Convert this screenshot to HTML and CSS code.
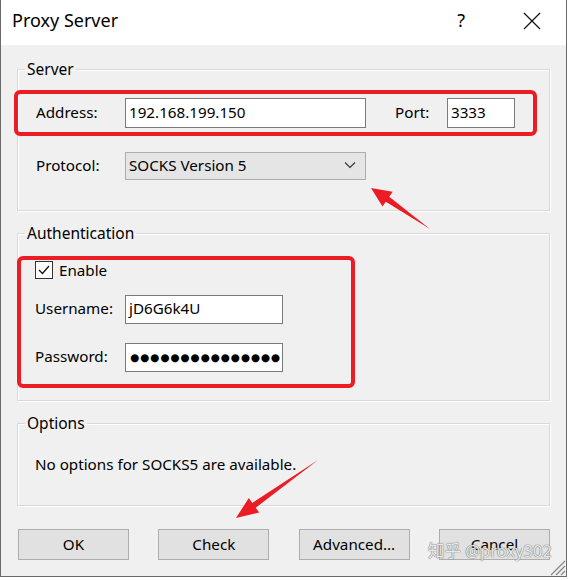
FILE: index.html
```html
<!DOCTYPE html>
<html>
<head>
<meta charset="utf-8">
<link rel="stylesheet" href="styles.css">
</head>
<body>
<div class="window">
  <div class="titlebar">
    <span class="title">Proxy Server</span>
    <span class="help">?</span>
    <svg class="close" width="18" height="18" viewBox="0 0 18 18"><path d="M1 1 L17 17 M17 1 L1 17" stroke="#111" stroke-width="1.2" fill="none"/></svg>
  </div>
  <div class="body">
    <fieldset class="group server">
      <legend>Server</legend>
      <div class="row">
        <span class="lbl">Address:</span>
        <div class="input addr">192.168.199.150</div>
        <span class="lbl port-lbl">Port:</span>
        <div class="input port">3333</div>
      </div>
      <div class="row row-proto">
        <span class="lbl">Protocol:</span>
        <div class="combo"><span>SOCKS Version 5</span>
          <svg width="12" height="8" viewBox="0 0 12 8"><path d="M1 1.5 L6 6.5 L11 1.5" stroke="#333" stroke-width="1.1" fill="none"/></svg>
        </div>
      </div>
    </fieldset>

    <fieldset class="group auth">
      <legend>Authentication</legend>
      <div class="check-row">
        <span class="checkbox"><svg width="16" height="16" viewBox="0 0 16 16"><path d="M3 8 L6.5 11.5 L13 4" stroke="#111" stroke-width="1.3" fill="none"/></svg></span>
        <span>Enable</span>
      </div>
      <div class="row row-user">
        <span class="lbl lbl-auth">Username:</span>
        <div class="input cred">jD6G6k4U</div>
      </div>
      <div class="row row-pass">
        <span class="lbl lbl-auth">Password:</span>
        <div class="input cred dots">●●●●●●●●●●●●●●●</div>
      </div>
    </fieldset>

    <fieldset class="group options">
      <legend>Options</legend>
      <div class="note">No options for SOCKS5 are available.</div>
    </fieldset>

    <div class="buttons">
      <div class="btn">OK</div>
      <div class="btn">Check</div>
      <div class="btn">Advanced...</div>
      <div class="btn">Cancel</div>
    </div>
  </div>

  <div class="mark mark-1"></div>
  <div class="mark mark-2"></div>
  <svg class="arrows" width="567" height="580" viewBox="0 0 567 580">
    <polygon points="371,188 392.6,191.8 389.2,196.7 430,229 385.8,201.7 382.5,206.6" fill="#ec1c24"/>
    <polygon points="236,518 248.8,498 252.3,502.9 318,460 255.7,507.7 259.2,512.6" fill="#ec1c24"/>
  </svg>
  <div class="watermark">知乎 @proxy302</div>
  <svg class="grip" width="18" height="18" viewBox="0 0 18 18">
    <path d="M17 3 L3 17 M17 8 L8 17 M17 13 L13 17" stroke="#8a8a8a" stroke-width="1.3" fill="none"/>
  </svg>
</div>
</body>
</html>
```
FILE: styles.css
```css
* { box-sizing: border-box; }
html, body { margin: 0; padding: 0; background: #fff; }
body {
  font-family: "Noto Sans", "Noto Sans CJK SC", sans-serif;
  font-size: 15.2px;
  color: #000;
}
.window {
  position: relative;
  width: 567px;
  height: 577px;
  border-left: 1px solid #6a6a6a;
  border-right: 1px solid #6a6a6a;
  border-bottom: 1px solid #6a6a6a;
  background: #f0f0f0;
}
.titlebar {
  height: 45px;
  background: #fff;
  display: flex;
  align-items: center;
  padding-left: 11px;
}
.title { font-size: 18px; flex: 1; padding-bottom: 6px; }
.help { font-size: 18px; margin-right: 58px; padding-bottom: 6px; }
.close { margin-right: 25px; margin-bottom: 4px; }

.body { padding: 14px 16px 0 16px; }
.group {
  margin: 0;
  border: 1px solid #d9d9d9;
  box-shadow: inset 1px 1px 0 #fff, 1px 1px 0 #fff;
  min-width: 0;
}
.group legend {
  padding: 0 2px;
  line-height: 20px;
  font-size: 15.5px;
}
.server { padding: 19px 10px 30px 18px; }
.server legend { margin-left: -11px; }
.auth { margin-top: 12px; padding: 17px 10px 28px 17px; }
.auth legend { margin-left: -10px; }
.options { margin-top: 12px; padding: 21px 10px 31px 17px; }
.options legend { margin-left: -10px; }

.row { display: flex; align-items: center; }
.row-proto { margin-top: 24px; }
.row-user { margin-top: 15px; }
.row-pass { margin-top: 19px; }
.lbl { width: 89px; flex: none; padding-bottom: 3px; }
.lbl-auth { width: 90px; }
.port-lbl { width: 52px; margin-left: 29px; }

.input {
  background: #fff;
  border: 1px solid #7a7a7a;
  height: 30px;
  line-height: 26px;
  padding: 0 3px;
  white-space: nowrap;
  overflow: hidden;
}
.addr { width: 241px; }
.port { width: 68px; }
.cred { width: 158px; height: 29px; line-height: 25px; }
.dots {
  font-family: "DejaVu Sans", sans-serif;
  font-size: 10.5px;
  letter-spacing: 0.9px;
  line-height: 27px;
  padding-left: 4px;
}

.combo {
  width: 241px;
  height: 28px;
  background: #e5e5e5;
  border: 1px solid #adadad;
  display: flex;
  align-items: center;
  justify-content: space-between;
  padding: 0 9px 2px 3px;
}

.check-row { display: flex; align-items: center; height: 20px; gap: 6px; }
.checkbox {
  width: 18px; height: 18px;
  border: 1px solid #333;
  background: #fff;
  display: flex; align-items: center; justify-content: center;
}

.note { line-height: 20px; }

.buttons {
  margin-top: 23px;
  display: flex;
  justify-content: space-between;
  padding: 0 0 0 1px;
}
.btn {
  width: 111px;
  height: 31px;
  background: #e1e1e1;
  border: 1px solid #adadad;
  display: flex;
  align-items: center;
  justify-content: center;
  padding-bottom: 2px;
}

.mark {
  position: absolute;
  border: 4px solid #ec1c24;
  border-radius: 6px;
}
.mark-1 { left: 13px; top: 90px; width: 523px; height: 46px; }
.mark-2 { left: 16px; top: 256px; width: 338px; height: 132px; }
.arrows { position: absolute; left: -1px; top: 0; pointer-events: none; }
.watermark {
  position: absolute;
  left: 427px;
  top: 538px;
  font-size: 16.5px;
  color: rgba(255,255,255,0.85);
  text-shadow: 0 0 1px #707070, 0 0 1px #707070;
  white-space: nowrap;
}
.grip { position: absolute; right: 0; bottom: 0; }
```
